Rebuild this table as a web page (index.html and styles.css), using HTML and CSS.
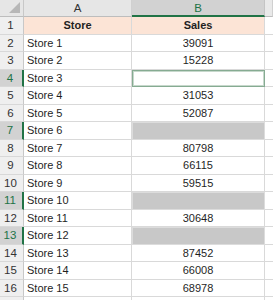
FILE: index.html
```html
<!DOCTYPE html>
<html>
<head>
<meta charset="utf-8">
<link rel="stylesheet" href="styles.css">
</head>
<body>
<div class="sheet">
  <div class="corner"><span class="tri"></span></div>
  <div class="colh">A</div>
  <div class="colh sel">B</div>
  <div class="colh rest"></div>

  <div class="rowh">1</div><div class="cell head">Store</div><div class="cell head">Sales</div><div class="cell blank"></div>
  <div class="rowh">2</div><div class="cell">Store 1</div><div class="cell num">39091</div><div class="cell blank"></div>
  <div class="rowh">3</div><div class="cell">Store 2</div><div class="cell num">15228</div><div class="cell blank"></div>
  <div class="rowh sel">4</div><div class="cell">Store 3</div><div class="cell active"></div><div class="cell blank"></div>
  <div class="rowh">5</div><div class="cell">Store 4</div><div class="cell num">31053</div><div class="cell blank"></div>
  <div class="rowh">6</div><div class="cell">Store 5</div><div class="cell num">52087</div><div class="cell blank"></div>
  <div class="rowh sel">7</div><div class="cell">Store 6</div><div class="cell picked"></div><div class="cell blank"></div>
  <div class="rowh">8</div><div class="cell">Store 7</div><div class="cell num">80798</div><div class="cell blank"></div>
  <div class="rowh">9</div><div class="cell">Store 8</div><div class="cell num">66115</div><div class="cell blank"></div>
  <div class="rowh">10</div><div class="cell">Store 9</div><div class="cell num">59515</div><div class="cell blank"></div>
  <div class="rowh sel">11</div><div class="cell">Store 10</div><div class="cell picked"></div><div class="cell blank"></div>
  <div class="rowh">12</div><div class="cell">Store 11</div><div class="cell num">30648</div><div class="cell blank"></div>
  <div class="rowh sel">13</div><div class="cell">Store 12</div><div class="cell picked"></div><div class="cell blank"></div>
  <div class="rowh">14</div><div class="cell">Store 13</div><div class="cell num">87452</div><div class="cell blank"></div>
  <div class="rowh">15</div><div class="cell">Store 14</div><div class="cell num">66008</div><div class="cell blank"></div>
  <div class="rowh">16</div><div class="cell">Store 15</div><div class="cell num">68978</div><div class="cell blank"></div>
  <div class="rowh"></div><div class="cell"></div><div class="cell"></div><div class="cell blank"></div>
</div>
</body>
</html>
```
FILE: styles.css
```css
html, body {
  margin: 0;
  padding: 0;
  background: #ffffff;
}
.sheet {
  display: grid;
  grid-template-columns: 24px 108px 133px 1fr;
  grid-template-rows: 17px repeat(17, 17.5px);
  width: 273px;
  height: 300px;
  overflow: hidden;
  font-family: "Liberation Sans", Arial, sans-serif;
  font-size: 11px;
  color: #1f1f1f;
}
.sheet > div {
  box-sizing: border-box;
  display: flex;
  align-items: center;
  overflow: hidden;
  white-space: nowrap;
}
.corner {
  background: #e6e6e6;
  border-right: 1px solid #c8c8c8;
  border-bottom: 1px solid #bdbdbd;
  position: relative;
}
.tri {
  position: absolute;
  right: 3px;
  bottom: 3px;
  width: 0;
  height: 0;
  border-left: 11px solid transparent;
  border-bottom: 11px solid #b7b7b7;
}
.colh {
  background: #e6e6e6;
  border-right: 1px solid #d0d0d0;
  border-bottom: 1px solid #bdbdbd;
  justify-content: center;
  color: #333;
  font-size: 11.5px;
}
.colh.sel {
  background: #d2d2d2;
  color: #217346;
  border-bottom: 2px solid #217346;
  border-right: 1px solid #c4c4c4;
}
.colh.rest {
  background: #e9e9e9;
}
.rowh {
  background: #efefef;
  border-right: 1px solid #c8c8c8;
  border-bottom: 1px solid #d8d8d8;
  justify-content: center;
  color: #333;
  font-size: 11.5px;
  padding-right: 2px;
}
.rowh.sel {
  background: #d2d2d2;
  color: #217346;
  border-right: 2px solid #217346;
}
.cell {
  background: #ffffff;
  border-right: 1px solid #d9d9d9;
  border-bottom: 1px solid #d9d9d9;
  padding-left: 3px;
}
.cell.head {
  background: #fce4d6;
  font-weight: bold;
  justify-content: center;
  padding-left: 0;
}
.cell.num {
  justify-content: center;
  padding-left: 0;
}
.cell.blank {
  border-right: none;
}
.cell.active {
  border: 1px solid #86ab92;
  outline: 1px solid #c7d8cc;
  outline-offset: -2px;
}
.cell.picked {
  background: #c8c8c8;
  border: 1px solid #dcdcdc;
}
```
